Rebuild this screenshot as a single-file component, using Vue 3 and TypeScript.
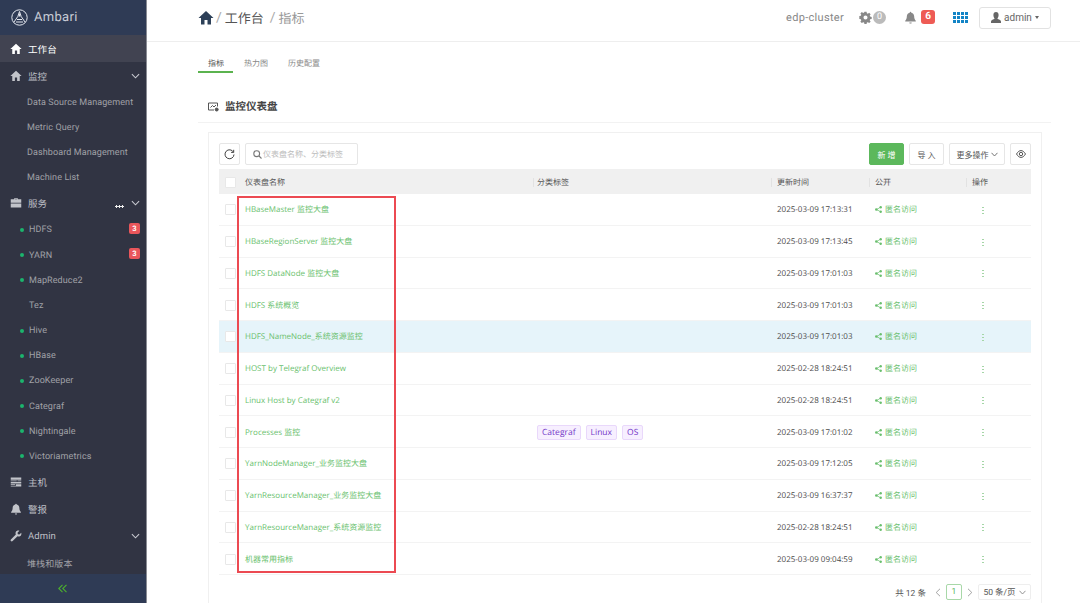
<script setup lang="ts">
interface SideItem {
  label: string;
  kind: 'main' | 'sub' | 'svc';
  icon?: string;
  active?: boolean;
  arrow?: boolean;
  more?: boolean;
  dot?: boolean;
  badge?: number;
}

interface Row {
  name: string;
  time: string;
  tags?: string[];
  hover?: boolean;
}

const sideItems: SideItem[] = [
  { label: '工作台', kind: 'main', icon: 'home', active: true },
  { label: '监控', kind: 'main', icon: 'home', arrow: true },
  { label: 'Data Source Management', kind: 'sub' },
  { label: 'Metric Query', kind: 'sub' },
  { label: 'Dashboard Management', kind: 'sub' },
  { label: 'Machine List', kind: 'sub' },
  { label: '服务', kind: 'main', icon: 'case', arrow: true, more: true },
  { label: 'HDFS', kind: 'svc', dot: true, badge: 3 },
  { label: 'YARN', kind: 'svc', dot: true, badge: 3 },
  { label: 'MapReduce2', kind: 'svc', dot: true },
  { label: 'Tez', kind: 'svc' },
  { label: 'Hive', kind: 'svc', dot: true },
  { label: 'HBase', kind: 'svc', dot: true },
  { label: 'ZooKeeper', kind: 'svc', dot: true },
  { label: 'Categraf', kind: 'svc', dot: true },
  { label: 'Nightingale', kind: 'svc', dot: true },
  { label: 'Victoriametrics', kind: 'svc', dot: true },
  { label: '主机', kind: 'main', icon: 'host' },
  { label: '警报', kind: 'main', icon: 'bell' },
  { label: 'Admin', kind: 'main', icon: 'wrench', arrow: true },
  { label: '堆栈和版本', kind: 'sub' },
];

const rows: Row[] = [
  { name: 'HBaseMaster 监控大盘', time: '2025-03-09 17:13:31' },
  { name: 'HBaseRegionServer 监控大盘', time: '2025-03-09 17:13:45' },
  { name: 'HDFS DataNode 监控大盘', time: '2025-03-09 17:01:03' },
  { name: 'HDFS 系统概览', time: '2025-03-09 17:01:03' },
  { name: 'HDFS_NameNode_系统资源监控', time: '2025-03-09 17:01:03', hover: true },
  { name: 'HOST by Telegraf Overview', time: '2025-02-28 18:24:51' },
  { name: 'Linux Host by Categraf v2', time: '2025-02-28 18:24:51' },
  { name: 'Processes 监控', time: '2025-03-09 17:01:02', tags: ['Categraf', 'Linux', 'OS'] },
  { name: 'YarnNodeManager_业务监控大盘', time: '2025-03-09 17:12:05' },
  { name: 'YarnResourceManager_业务监控大盘', time: '2025-03-09 16:37:37' },
  { name: 'YarnResourceManager_系统资源监控', time: '2025-02-28 18:24:51' },
  { name: '机器常用指标', time: '2025-03-09 09:04:59' },
];

const homePath = 'M8 1 0.5 8H3v6.5h3.5V10h3v4.5H13V8h2.500z';
</script>

<template>
  <div class="page">
    <aside class="side">
      <div class="brand">
        <svg width="17" height="17" viewBox="0 0 17 17" fill="none" stroke="#e4e7ee" stroke-width="1">
          <circle cx="8.500" cy="8.500" r="7.700" />
          <path d="M8.500 2.500 6.800 7.500 3 13M8.500 2.500 10.200 7.500 14 13M6 10.500h5M5 13h7" />
          <path d="M8.500 3.500 7.500 7.500h2z" fill="#e4e7ee" stroke="none" />
        </svg>
        <span>Ambari</span>
      </div>
      <nav class="menu">
        <div
          v-for="item in sideItems"
          :key="item.label"
          class="menu-item"
          :class="[item.kind, { active: item.active }]"
        >
          <span v-if="item.dot" class="dot"></span>
          <svg v-if="item.icon === 'home'" class="m-icon" viewBox="0 0 16 16"><path :d="homePath" /></svg>
          <svg v-else-if="item.icon === 'case'" class="m-icon" viewBox="0 0 16 16">
            <path d="M5.500 3V1.500h5V3H15v4.500H1V3zM6.500 2.500V3h3v-.5zM1 8.500h14V14H1z" />
          </svg>
          <svg v-else-if="item.icon === 'host'" class="m-icon" viewBox="0 0 16 16">
            <path d="M1 2h14v3H1zM1 6h8v1H1zM10 6h5v1h-5zM1 8h14v2H1zM1 11h6v1H1zM8 11h7v3H1v-1h7z" />
          </svg>
          <svg v-else-if="item.icon === 'bell'" class="m-icon" viewBox="0 0 16 16">
            <path d="M8 1c.6 0 1 .4 1 1 2.300.5 3.500 2.300 3.500 4.500 0 3 1 4.500 2 5.500v1H1.500v-1c1-1 2-2.500 2-5.500C3.500 4.300 4.700 2.500 7 2c0-.6.400-1 1-1zM6.500 14h3a1.500 1.500 0 0 1-3 0z" />
          </svg>
          <svg v-else-if="item.icon === 'wrench'" class="m-icon" viewBox="0 0 16 16">
            <path d="M15 3.500 12.500 6 10.500 5.500 10 3.500 12.500 1C10.500.4 8.500 1 7.700 2.800 7.200 4 7.400 5.200 7.800 6L1.200 12.500a1.600 1.600 0 0 0 2.300 2.300L10 8.200c1 .4 2.200.5 3.300 0 1.700-.8 2.300-2.800 1.700-4.700z" />
          </svg>
          <span class="m-label">{{ item.label }}</span>
          <span v-if="item.badge" class="m-badge">{{ item.badge }}</span>
          <span v-if="item.more" class="m-more"></span>
          <svg v-if="item.arrow" class="m-arrow" viewBox="0 0 10 6" fill="none" stroke="#c9cbd2" stroke-width="1.200">
            <path d="M1 1l4 4 4-4" />
          </svg>
        </div>
      </nav>
      <div class="collapse">
        <svg width="10" height="9" viewBox="0 0 10 9" fill="none" stroke="#4caf2e" stroke-width="1.100">
          <path d="M4.500.8.800 4.500l3.700 3.700M8.500.8 4.800 4.500l3.700 3.700" />
        </svg>
      </div>
    </aside>

    <main class="main">
      <header class="topbar">
        <div class="crumbs">
          <svg class="c-home" viewBox="0 0 16 16"><path :d="homePath" /></svg>
          <span class="sep">/</span>
          <span class="c-now">工作台</span>
          <span class="sep">/</span>
          <span class="c-last">指标</span>
        </div>
        <div class="tools">
          <span class="cluster">edp-cluster</span>
          <span class="t-group">
            <svg class="t-icon" viewBox="0 0 16 16">
              <path
                fill-rule="evenodd"
                d="M6.700 1h2.600l.4 1.900 1.200.5 1.600-1.100 1.800 1.800-1.100 1.600.5 1.200 1.900.4v2.600l-1.900.4-.5 1.200 1.100 1.600-1.800 1.800-1.600-1.100-1.200.5-.4 1.900H6.700l-.4-1.900-1.200-.5-1.600 1.100-1.800-1.800 1.100-1.600-.5-1.200-1.900-.4V6.300l1.900-.4.500-1.200-1.100-1.600 1.800-1.800 1.600 1.100 1.200-.5zM8 5.500a2.500 2.500 0 1 0 0 5 2.500 2.500 0 0 0 0-5z"
              />
            </svg>
            <span class="zero">0</span>
          </span>
          <span class="t-group">
            <svg class="t-icon" viewBox="0 0 16 16">
              <path d="M8 1c.6 0 1 .4 1 1 2.300.5 3.500 2.300 3.500 4.500 0 3 1 4.500 2 5.500v1H1.500v-1c1-1 2-2.500 2-5.500C3.500 4.300 4.700 2.500 7 2c0-.6.400-1 1-1zM6.500 14h3a1.500 1.500 0 0 1-3 0z" />
            </svg>
            <span class="six">6</span>
          </span>
          <span class="grid-ic">
            <i v-for="n in 12" :key="n"></i>
          </span>
          <button class="user-btn">
            <svg width="10" height="11" viewBox="0 0 10 11" fill="#666">
              <path d="M5 0c1.700 0 2.600 1.300 2.600 3S6.800 6 6.400 6.700c1 .6 3.600 1 3.600 2.800V11H0V9.500c0-1.800 2.600-2.200 3.600-2.800C3.200 6 2.400 4.700 2.400 3S3.300 0 5 0z" />
            </svg>
            <span>admin</span>
            <i class="caret"></i>
          </button>
        </div>
      </header>

      <div class="content">
        <div class="tabs">
          <span class="tab on">指标</span>
          <span class="tab">热力图</span>
          <span class="tab">历史配置</span>
        </div>

        <div class="sec-title">
          <svg width="11" height="10" viewBox="0 0 11 10" fill="none" stroke="#555" stroke-width="1">
            <path d="M6 8H.5V1h9v3.500M2.500 5.500l2-2 1.500 1.500 2-2" />
            <circle cx="8.700" cy="7.500" r="1.500" fill="#555" />
          </svg>
          <span>监控仪表盘</span>
        </div>

        <section class="card">
          <div class="toolbar">
            <button class="btn icon-btn">
              <svg width="11" height="11" viewBox="0 0 11 11" fill="none" stroke="#444" stroke-width="1">
                <path d="M9.500 3.200A4.500 4.500 0 1 0 10 5.500M9.700 .8v2.600H7.100" />
              </svg>
            </button>
            <div class="search">
              <svg width="9" height="9" viewBox="0 0 9 9" fill="none" stroke="#777" stroke-width="1.100">
                <circle cx="3.700" cy="3.700" r="2.900" />
                <path d="M6 6l2.500 2.500" />
              </svg>
              <span>仪表盘名称、分类标签</span>
            </div>
            <div class="spacer"></div>
            <button class="btn primary">新 增</button>
            <button class="btn import">导 入</button>
            <button class="btn more">
              更多操作
              <svg width="7" height="5" viewBox="0 0 7 5" fill="none" stroke="#666" stroke-width=".9">
                <path d="M.5.800 3.500 4l3-3.200" />
              </svg>
            </button>
            <button class="btn icon-btn">
              <svg width="10" height="8" viewBox="0 0 10 8" fill="none" stroke="#444" stroke-width=".9">
                <path d="M.5 4C2 1.500 3.500.6 5 .6S8 1.500 9.500 4C8 6.500 6.500 7.400 5 7.400S2 6.500.5 4z" />
                <circle cx="5" cy="4" r="1.700" />
              </svg>
            </button>
          </div>

          <div class="t-head t-row">
            <span class="c-check"><i class="box"></i></span>
            <span class="c-name">仪表盘名称</span>
            <span class="c-tags th-sep first">分类标签</span>
            <span class="c-time th-sep">更新时间</span>
            <span class="c-pub th-sep">公开</span>
            <span class="c-op th-sep">操作</span>
          </div>
          <div v-for="row in rows" :key="row.name" class="t-body t-row" :class="{ hover: row.hover }">
            <span class="c-check"><i class="box"></i></span>
            <span class="c-name link">{{ row.name }}</span>
            <span class="c-tags">
              <em v-for="tag in row.tags" :key="tag" class="tag">{{ tag }}</em>
            </span>
            <span class="c-time">{{ row.time }}</span>
            <span class="c-pub link">
              <svg width="7" height="7" viewBox="0 0 7 7" fill="#6abf6e">
                <circle cx="1.300" cy="3.500" r="1.300" />
                <circle cx="5.700" cy="1.200" r="1.200" />
                <circle cx="5.700" cy="5.800" r="1.200" />
                <path d="M1.300 3.200 5.500 1l.3.500-4.200 2.200zM1.600 3.300 5.800 5.500l-.3.500L1.100 3.800z" />
              </svg>
              匿名访问
            </span>
            <span class="c-op"><i class="dots"></i></span>
          </div>

          <div class="pager">
            <span class="total">共 12 条</span>
            <svg width="6" height="9" viewBox="0 0 6 9" fill="none" stroke="#999" stroke-width=".9"><path d="M5 .8 1.200 4.500 5 8.200" /></svg>
            <span class="page-no">1</span>
            <svg width="6" height="9" viewBox="0 0 6 9" fill="none" stroke="#999" stroke-width=".9"><path d="M1 .8 4.800 4.500 1 8.200" /></svg>
            <span class="page-size">
              50 条/页
              <svg width="7" height="5" viewBox="0 0 7 5" fill="none" stroke="#888" stroke-width=".9"><path d="M.5.800 3.500 4l3-3.200" /></svg>
            </span>
          </div>
          <div class="mark"></div>
        </section>
      </div>
    </main>
  </div>
</template>

<style>
html,
body {
  margin: 0;
  height: 100%;
  overflow: hidden;
  background: #fff;
}
</style>

<style scoped>
.page {
  display: flex;
  width: 1080px;
  height: 603px;
  overflow: hidden;
  font-family: Roboto, 'Noto Sans CJK SC', sans-serif;
  color: #555;
  text-rendering: geometricPrecision;
}

.side {
  width: 147px;
  height: 603px;
  flex: none;
  display: flex;
  flex-direction: column;
  box-sizing: border-box;
  background: #313443;
  border-right: 1px solid #8a8c94;
}

.brand {
  height: 35px;
  flex: none;
  display: flex;
  align-items: center;
  gap: 6px;
  padding-left: 11px;
  background: #2f3b55;
  color: #c8ccd6;
  font-size: 13px;
  letter-spacing: 0.3px;
}

.menu {
  flex: 1;
  min-height: 0;
}

.menu-item {
  display: flex;
  align-items: center;
  color: #a0a1a7;
  font-size: 9px;
  letter-spacing: 0.1px;
}

.menu-item.main {
  height: 27px;
  padding-left: 10px;
  color: #bdbfc5;
  font-size: 9.500px;
}

.menu-item.active {
  background: #414351;
  color: #fff;
}

.menu-item.sub {
  height: 25.200px;
  padding: 2px 0 0 27px;
  box-sizing: border-box;
}

.menu-item.svc {
  height: 25.200px;
  padding: 2px 0 0 29px;
  box-sizing: border-box;
  position: relative;
}

.menu-item.svc .dot {
  position: absolute;
  left: 20px;
  top: 11px;
  width: 4px;
  height: 4px;
  border-radius: 50%;
  background: #1cb46d;
}

.m-icon {
  width: 12px;
  height: 12px;
  margin-right: 6px;
  fill: #c2c4ca;
}

.active .m-icon {
  fill: #fff;
}

.m-label {
  flex: 1;
}

.m-badge {
  position: absolute;
  right: 6px;
  top: 6px;
  width: 11px;
  height: 11px;
  border-radius: 2px;
  background: #e9565b;
  color: #fff;
  font-size: 7.500px;
  font-weight: 700;
  line-height: 11px;
  text-align: center;
  letter-spacing: 0;
}

.m-more {
  width: 9px;
  height: 3px;
  margin: 6px 7px 0 0;
  background: radial-gradient(circle, #eee 1px, transparent 1.200px) 0 0 / 3px 3px;
}

.m-arrow {
  width: 9px;
  height: 6px;
  margin-right: 6px;
}

.collapse {
  height: 29px;
  flex: none;
  position: relative;
  display: flex;
  align-items: center;
  justify-content: center;
  padding-right: 20px;
  box-sizing: border-box;
  background: #2f3b55;
}

.main {
  flex: 1;
  min-width: 0;
}

.topbar {
  height: 42px;
  display: flex;
  align-items: center;
  justify-content: space-between;
  padding: 0 29px 6px 51px;
  box-sizing: border-box;
  border-bottom: 1px solid #eeeeee;
}

.crumbs {
  display: flex;
  align-items: center;
  gap: 3px;
  font-size: 13px;
  color: #4c5a6b;
}

.c-home {
  width: 16px;
  height: 16px;
  margin-right: -1px;
  fill: #2d4058;
}

.sep {
  color: #aaa;
  font-size: 14px;
}

.c-now {
  margin-right: 3px;
  color: #555;
}

.c-last {
  color: #999;
}

.tools {
  display: flex;
  align-items: center;
}

.cluster {
  font-size: 11px;
  color: #888;
  letter-spacing: 0.3px;
  margin-right: 15px;
}

.t-group {
  display: flex;
  align-items: center;
  gap: 1px;
  margin-right: 18px;
}

.t-icon {
  width: 13px;
  height: 13px;
  fill: #888;
}

.zero {
  width: 13px;
  height: 13px;
  border-radius: 50%;
  background: #bbb;
  color: #fff;
  font-size: 9px;
  line-height: 13px;
  text-align: center;
}

.six {
  width: 14px;
  height: 14px;
  margin: -2px 0 0 3px;
  border-radius: 3px;
  background: #ee5b55;
  color: #fff;
  font-size: 10px;
  font-weight: 700;
  line-height: 14px;
  text-align: center;
}

.grid-ic {
  display: grid;
  grid-template-columns: repeat(4, 3px);
  grid-auto-rows: 3px;
  gap: 1px;
  margin-right: 11px;
}

.grid-ic i {
  background: #1384c6;
}

.user-btn {
  display: flex;
  align-items: center;
  justify-content: center;
  gap: 3px;
  width: 72px;
  height: 22px;
  padding: 0;
  border: 1px solid #e2e2e2;
  border-radius: 3px;
  background: #fff;
  color: #666;
  font: 10px Roboto, sans-serif;
}

.caret {
  border-left: 2.500px solid transparent;
  border-right: 2.500px solid transparent;
  border-top: 3px solid #666;
}

.content {
  padding-left: 51px;
  padding-right: 29px;
}

.tabs {
  display: flex;
  height: 31px;
  align-items: flex-end;
}

.tab {
  height: 26px;
  padding: 11px 8px 0 10px;
  box-sizing: border-box;
  font-size: 8px;
  color: #888;
  line-height: 12px;
  margin-right: 2px;
}

.tab.on {
  width: 35px;
  padding: 11px 0 0 10px;
  margin-right: 1px;
  color: #555;
  border-bottom: 2px solid #5bb34f;
}

.sec-title {
  display: flex;
  align-items: center;
  gap: 6px;
  height: 50px;
  padding: 18px 0 0 10px;
  box-sizing: border-box;
  border-bottom: 1px solid #f2f2f2;
  font-size: 10.500px;
  font-weight: 700;
  color: #444;
}

.card {
  position: relative;
  width: 834px;
  height: 480px;
  margin: 9px 0 0 10px;
  padding: 10px;
  box-sizing: border-box;
  border: 1px solid #f0f0f0;
}

.toolbar {
  display: flex;
  align-items: center;
  gap: 5px;
  height: 22px;
  margin-bottom: 4px;
}

.spacer {
  flex: 1;
}

.btn {
  height: 22px;
  padding: 0;
  box-sizing: border-box;
  border: 1px solid #e6e6e6;
  border-radius: 2px;
  background: #fff;
  color: #555;
  font: 8px Roboto, 'Noto Sans CJK SC', sans-serif;
  display: flex;
  align-items: center;
  justify-content: center;
  gap: 2px;
}

.icon-btn {
  width: 21px;
}

.import {
  width: 35px;
}

.more {
  width: 56px;
}

.primary {
  width: 35px;
  background: #5cb85c;
  border-color: #5cb85c;
  color: #fff;
}

.search {
  display: flex;
  align-items: center;
  gap: 1px;
  width: 113px;
  height: 22px;
  padding-left: 7px;
  box-sizing: border-box;
  border: 1px solid #e6e6e6;
  border-radius: 2px;
  font-size: 8px;
  color: #bbb;
}

.t-row {
  display: flex;
  align-items: center;
  width: 812px;
  font-family: 'Open Sans', 'Noto Sans CJK SC', sans-serif;
  font-size: 8px;
}

.t-head {
  height: 25px;
  padding-top: 1px;
  box-sizing: border-box;
  background: #f0f0f0;
  color: #555;
}

.t-body {
  height: 31.750px;
  padding-top: 1px;
  box-sizing: border-box;
  border-bottom: 1px solid #f3f3f3;
  color: #4a4a4a;
}

.t-body.hover {
  background: #e6f4fa;
}

.c-check {
  width: 26px;
  flex: none;
  display: flex;
  padding-left: 6px;
  box-sizing: border-box;
}

.box {
  width: 9px;
  height: 9px;
  border: 1px solid #e8e8e8;
  border-radius: 1px;
  background: #fff;
}

.c-name {
  width: 292px;
  flex: none;
}

.c-tags {
  width: 240px;
  flex: none;
  display: flex;
  gap: 5px;
}

.c-time {
  width: 98px;
  flex: none;
  white-space: nowrap;
}

.c-pub {
  width: 97px;
  flex: none;
  display: flex;
  align-items: center;
  gap: 3px;
}

.c-op {
  flex: 1;
}

.th-sep {
  position: relative;
}

.th-sep::before {
  content: '';
  position: absolute;
  left: -6px;
  top: 1px;
  bottom: 1px;
  width: 1px;
  background: #e2e2e2;
}

.th-sep.first::before {
  left: -4px;
}

.t-body .c-op {
  padding-left: 10px;
}

.link {
  color: #6abf6e;
}

.dots {
  display: block;
  width: 2px;
  height: 8px;
  background: radial-gradient(circle, #a5d6a7 0.9px, transparent 1px) 0 0 / 2px 3px;
}

.tag {
  height: 13px;
  padding: 0 4px;
  border: 1px solid #e9d8fb;
  border-radius: 2px;
  background: #f7efff;
  color: #7438c8;
  font-size: 8.500px;
  font-style: normal;
  line-height: 13px;
}

.pager {
  display: flex;
  align-items: center;
  justify-content: flex-end;
  gap: 5px;
  height: 16px;
  margin-top: 9px;
  font-size: 8.500px;
  color: #555;
  width: 812px;
}

.total {
  margin-right: 4px;
  padding-top: 2px;
}

.page-no {
  width: 16px;
  height: 16px;
  box-sizing: border-box;
  border: 1px solid #a8d8a8;
  border-radius: 2px;
  color: #62b866;
  line-height: 14px;
  text-align: center;
}

.page-size {
  display: flex;
  align-items: center;
  justify-content: center;
  gap: 3px;
  width: 53px;
  height: 16px;
  box-sizing: border-box;
  border: 1px solid #eee;
  border-radius: 2px;
}

/* annotation drawn over the screenshot */
.mark {
  position: absolute;
  left: 28px;
  top: 63px;
  width: 158.500px;
  height: 376.500px;
  box-sizing: border-box;
  border: 2px solid #ec4a52;
  pointer-events: none;
}
</style>
